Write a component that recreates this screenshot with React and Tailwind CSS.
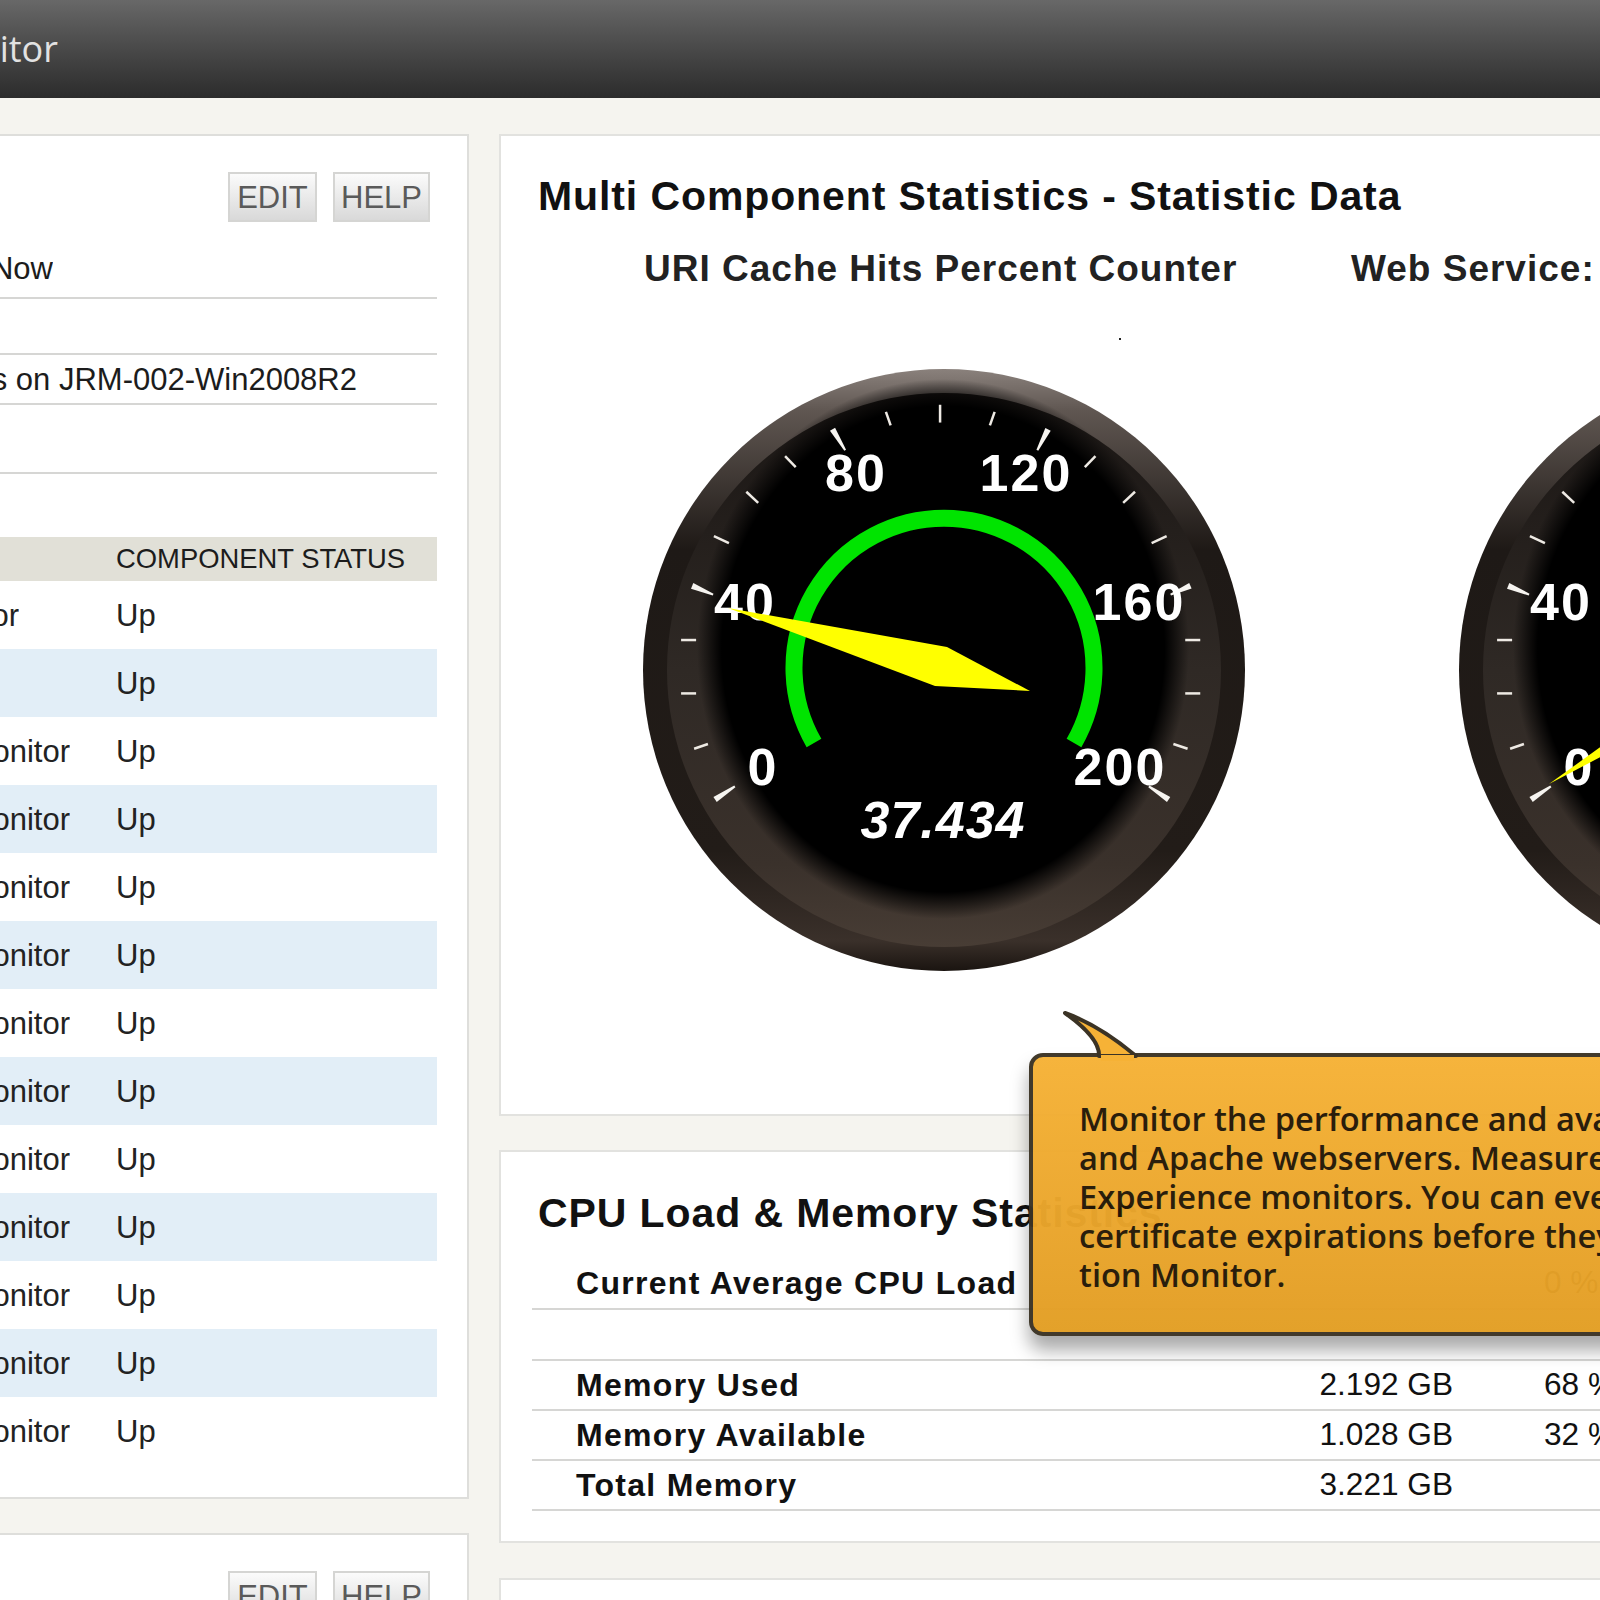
import React from 'react';

const SANS = 'font-["Liberation_Sans",Arial,sans-serif]';

const rows = [
  'Process Monitor', 'Service', 'Performance Monitor', 'Performance Monitor', 'Performance Monitor',
  'Performance Monitor', 'Performance Monitor', 'Performance Monitor', 'Performance Monitor',
  'Performance Monitor', 'Performance Monitor', 'Performance Monitor', 'Performance Monitor',
];

// dial ticks, outer point then inner point, major ones are wedges
const TICKS = [
  [243, 1158, 293, 1125, 1], [190, 1030, 225, 1018], [157, 890, 195, 890], [157, 755, 195, 755],
  [185, 618, 238, 640, 1], [240, 492, 278, 510], [322, 380, 352, 408], [420, 290, 447, 318],
  [540, 222, 572, 275, 1], [675, 178, 687, 212], [812, 160, 812, 205], [950, 178, 938, 212],
  [1085, 222, 1058, 275, 1], [1205, 290, 1178, 318], [1305, 380, 1275, 408], [1385, 492, 1347, 510],
  [1445, 618, 1395, 640, 1], [1470, 755, 1432, 755], [1470, 890, 1432, 890], [1438, 1030, 1402, 1018],
  [1390, 1158, 1340, 1125, 1],
];

function Ticks() {
  return TICKS.map(([a, b, c, d, major], i) => {
    const x1 = a / 2.529 - 21;
    const y1 = b / 2.529 - 26.5;
    const x2 = c / 2.529 - 21;
    const y2 = d / 2.529 - 26.5;
    if (!major) {
      return <line key={i} x1={x1} y1={y1} x2={x2} y2={y2} stroke="#eeeae4" strokeWidth="2.5" />;
    }
    const len = Math.hypot(x2 - x1, y2 - y1);
    const nx = -(y2 - y1) / len;
    const ny = (x2 - x1) / len;
    const pts = [
      [x1 + nx * 3, y1 + ny * 3],
      [x1 - nx * 3, y1 - ny * 3],
      [x2 - nx, y2 - ny],
      [x2 + nx, y2 + ny],
    ];
    return <polygon key={i} points={pts.map((p) => p.join(',')).join(' ')} fill="#f6f4f0" />;
  });
}

function Gauge({ id, value, needle }) {
  return (
    <svg viewBox="0 0 620 620" className="w-[620px] h-[620px] shrink-0 block">
      <defs>
        <linearGradient id={`rim-${id}`} x1="0" y1="0" x2="0" y2="1">
          <stop offset="0" stopColor="#8a817c" />
          <stop offset="0.07" stopColor="#5f5651" />
          <stop offset="0.3" stopColor="#1e1916" />
          <stop offset="0.8" stopColor="#221c18" />
          <stop offset="0.95" stopColor="#3a302a" />
          <stop offset="1" stopColor="#1a1410" />
        </linearGradient>
        <linearGradient id={`ring-${id}`} x1="0" y1="0" x2="0" y2="1">
          <stop offset="0" stopColor="#191513" />
          <stop offset="0.5" stopColor="#2f2925" />
          <stop offset="0.85" stopColor="#3a312b" />
          <stop offset="1" stopColor="#483d35" />
        </linearGradient>
        <radialGradient id={`face-${id}`}>
          <stop offset="0.9" stopColor="#000" />
          <stop offset="1" stopColor="#000" stopOpacity="0" />
        </radialGradient>
      </defs>
      <circle cx="304" cy="302" r="301" fill={`url(#rim-${id})`} />
      <circle cx="304" cy="302" r="277" fill={`url(#ring-${id})`} />
      <ellipse cx="303" cy="281" rx="246" ry="270" fill={`url(#face-${id})`} />
      <path d="M 174 375 A 150 150 0 1 1 434 375" fill="none" stroke="#00e400" strokeWidth="17" />
      <Ticks />
      <g
        fill="#fff"
        fontFamily="'Liberation Sans', Arial, sans-serif"
        fontSize="52"
        fontWeight="700"
        textAnchor="middle"
        letterSpacing="2"
      >
        <text x="216" y="123">80</text>
        <text x="386" y="123">120</text>
        <text x="105" y="252">40</text>
        <text x="499" y="252">160</text>
        <text x="123" y="417">0</text>
        <text x="480" y="417">200</text>
        <text x="303" y="470" fontStyle="italic" letterSpacing="1">{value}</text>
      </g>
      <polygon points={needle} fill="#ffff00" />
    </svg>
  );
}

function Btn({ w, children }) {
  return (
    <span className={`flex items-center justify-center ${w} h-[50px] border-2 border-[#d5d5d3] bg-gradient-to-b from-[#fbfbfb] to-[#d9d9d9] text-[31px] leading-none text-[#5a5a5a]`}>
      {children}
    </span>
  );
}

function StatRow({ label, value, pct, h = 'h-[50px]', pad = '' }) {
  return (
    <div className={`flex items-center ${h} ${pad} border-b-2 border-[#d6d6d4] text-[31.6px] text-[#111] whitespace-nowrap`}>
      <span className="w-[44px] shrink-0" />
      <span className="w-[675px] shrink-0 text-[32px] font-bold tracking-[1.3px]">{label}</span>
      <span className="w-[202px] shrink-0 text-right">{value}</span>
      <span className="w-[91px] shrink-0" />
      <span className="w-[100px] shrink-0">{pct}</span>
    </div>
  );
}

export default function App() {
  return (
    <div className={`relative w-[1600px] h-[1600px] overflow-hidden bg-[#f5f4ef] ${SANS}`}>
      {/* top bar, the title runs off the left edge */}
      <div className="h-[98px] bg-gradient-to-b from-[#686868] to-[#2c2c2c] flex items-center">
        <div className='w-[58px] flex justify-end overflow-hidden whitespace-nowrap text-[36px] text-[#e2e2e2] font-["Open_Sans",sans-serif]'>
          Application Monitor
        </div>
      </div>

      <div className="flex items-start pt-[36px] gap-[30px]">
        <div className="w-[469px] shrink-0 flex flex-col gap-[34px]">
          <div className="h-[1365px] bg-white border-t-2 border-r-2 border-b-2 border-[#dededb] pr-[30px] pt-[36px]">
            <div className="flex justify-end gap-[16px] pr-[7px] h-[50px]">
              <Btn w="w-[89px]">EDIT</Btn>
              <Btn w="w-[97px]">HELP</Btn>
            </div>
            <div className="flex flex-col text-[31px] text-[#1c1c1c]">
              <div className="h-[77px] border-b-2 border-[#d6d6d4] flex items-center pt-[20px]">
                <div className="w-[53px] flex justify-end overflow-hidden whitespace-nowrap">Pin Now</div>
              </div>
              <div className="h-[56px] border-b-2 border-[#d6d6d4]" />
              <div className="h-[50px] border-b-2 border-[#d6d6d4] flex items-center pt-[3px]">
                <div className="w-[357px] flex justify-end overflow-hidden whitespace-nowrap">Processes on JRM-002-Win2008R2</div>
              </div>
              <div className="h-[69px] border-b-2 border-[#d6d6d4]" />
            </div>
            <div className="mt-[63px] h-[44px] bg-[#e1e0d7] flex items-center pl-[116px] text-[27.4px] text-[#1c1c1c] whitespace-nowrap">
              COMPONENT STATUS
            </div>
            {rows.map((name, i) => (
              <div
                key={i}
                className={`h-[68px] flex items-center pt-[2px] text-[31px] text-[#222] whitespace-nowrap ${i % 2 === 1 ? 'bg-[#e2eef7]' : ''}`}
              >
                <div className="w-[116px] shrink-0">
                  <div className={`flex justify-end overflow-hidden ${i === 0 ? 'w-[19px]' : i === 1 ? 'w-0' : 'w-[70px]'}`}>{name}</div>
                </div>
                <span>Up</span>
              </div>
            ))}
          </div>
          <div className="h-[100px] bg-white border-t-2 border-r-2 border-[#dededb] pr-[30px] pt-[36px]">
            <div className="flex justify-end gap-[16px] pr-[7px] h-[50px]">
              <Btn w="w-[89px]">EDIT</Btn>
              <Btn w="w-[97px]">HELP</Btn>
            </div>
          </div>
        </div>

        <div className="w-[1200px] shrink-0 flex flex-col">
          <div className="h-[982px] bg-white border-2 border-[#e2e2df] border-r-0 pl-[37px] pt-[35px] overflow-hidden">
            <h1 className="text-[41px] leading-[50px] font-bold tracking-[0.9px] text-[#111] whitespace-nowrap">
              Multi Component Statistics - Statistic Data
            </h1>
            <div className="flex mt-[26px] text-[37px] leading-[44px] font-bold text-[#222] whitespace-nowrap tracking-[1px]">
              <span className="ml-[106px] w-[707px] shrink-0">URI Cache Hits Percent Counter</span>
              <span>Web Service: Total Bytes</span>
            </div>
            <div className="flex mt-[77px] ml-[102px] gap-[196px]">
              <Gauge id="a" value="37.434" needle="88,240 307,279 390,323 295,318" />
              <Gauge id="b" value="0" needle="93,416 150,375 156,383" />
            </div>
          </div>

          <div className="h-[393px] mt-[34px] bg-white border-2 border-[#e2e2df] border-r-0 pt-[36px] pl-[31px] overflow-hidden">
            <h2 className="pl-[6px] text-[41px] leading-[50px] font-bold tracking-[0.9px] text-[#111] whitespace-nowrap">
              CPU Load &amp; Memory Statistics
            </h2>
            <div className="w-[1300px] mt-[3px]">
              <StatRow label="Current Average CPU Load" value="" pct="0 %" h="h-[69px]" pad="pt-[16px]" />
              <StatRow label="" value="" pct="" h="h-[51px]" />
              <StatRow label="Memory Used" value="2.192 GB" pct="68 %" />
              <StatRow label="Memory Available" value="1.028 GB" pct="32 %" />
              <StatRow label="Total Memory" value="3.221 GB" pct="" />
            </div>
          </div>

          <div className="h-[60px] mt-[35px] bg-white border-t-2 border-l-2 border-[#e2e2df]" />
        </div>
      </div>

      {/* stray speck on the dial panel */}
      <span className="absolute left-[1119px] top-[338px] w-[2px] h-[2px] bg-[#222]" />

      {/* help bubble over the page */}
      <div className="absolute left-[1029px] top-[1053px] w-[700px] h-[283px] rounded-[14px] border-[4px] border-[#3b3325] bg-gradient-to-b from-[#f6b236] to-[#e39e24] opacity-[0.97] shadow-[0_14px_18px_rgba(0,0,0,0.35)] pl-[46px] pt-[42px] font-['Open_Sans',sans-serif] font-semibold text-[32.6px] leading-[39px] text-[#241705] whitespace-nowrap">
        <p>Monitor the performance and availability of IIS</p>
        <p>and Apache webservers. Measure response</p>
        <p>Experience monitors. You can even</p>
        <p>certificate expirations before they</p>
        <p>tion Monitor.</p>
      </div>
      <svg className="absolute left-[1060px] top-[1008px]" width="80" height="54" viewBox="0 0 80 54">
        <path d="M5 5 Q39 17 76 48 L39 48 Q40 30 5 5 Z" fill="#f6b236" stroke="#3b3325" strokeWidth="4" strokeLinejoin="round" />
        <rect x="41" y="47" width="33" height="6" fill="#f6b236" />
      </svg>
    </div>
  );
}
